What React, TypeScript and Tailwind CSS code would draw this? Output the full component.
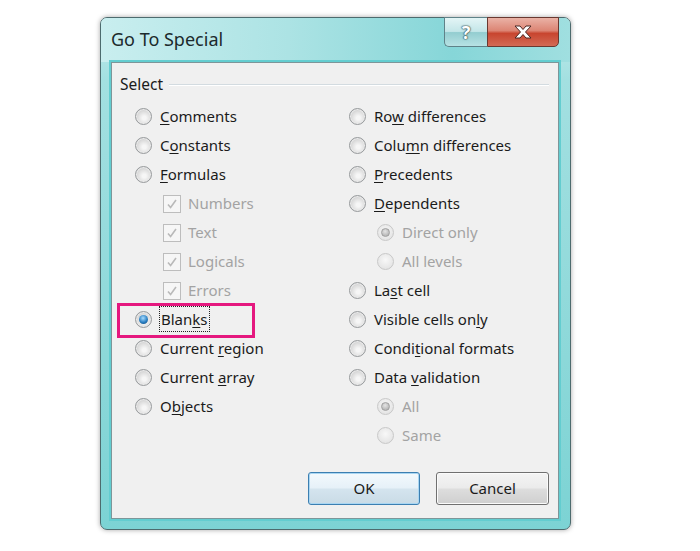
import React from "react"

type Item = {
  label: string
  key?: number
  kind?: "radio" | "check"
  indent?: boolean
  disabled?: boolean
  checked?: boolean
  focus?: boolean
}

const leftItems: Item[] = [
  { label: "Comments", key: 0 },
  { label: "Constants", key: 1 },
  { label: "Formulas", key: 0 },
  { label: "Numbers", kind: "check", indent: true, disabled: true, checked: true },
  { label: "Text", kind: "check", indent: true, disabled: true, checked: true },
  { label: "Logicals", kind: "check", indent: true, disabled: true, checked: true },
  { label: "Errors", kind: "check", indent: true, disabled: true, checked: true },
  { label: "Blanks", key: 4, checked: true, focus: true },
  { label: "Current region", key: 8 },
  { label: "Current array", key: 8 },
  { label: "Objects", key: 1 },
]

const rightItems: Item[] = [
  { label: "Row differences", key: 2 },
  { label: "Column differences", key: 4 },
  { label: "Precedents", key: 0 },
  { label: "Dependents", key: 0 },
  { label: "Direct only", indent: true, disabled: true, checked: true },
  { label: "All levels", indent: true, disabled: true },
  { label: "Last cell", key: 2 },
  { label: "Visible cells only", key: 16 },
  { label: "Conditional formats", key: 5 },
  { label: "Data validation", key: 5 },
  { label: "All", indent: true, disabled: true, checked: true },
  { label: "Same", indent: true, disabled: true },
]

function Label({ text, k }: { text: string; k?: number }) {
  if (k === undefined) return <>{text}</>
  return (
    <>
      {text.slice(0, k)}
      <span className="underline underline-offset-[2px]">{text[k]}</span>
      {text.slice(k + 1)}
    </>
  )
}

function Radio({ checked, disabled }: { checked?: boolean; disabled?: boolean }) {
  return (
    <div
      className={
        "w-[17px] h-[17px] rounded-full border flex items-center justify-center shrink-0 " +
        (disabled
          ? "border-[#c8c8c8] bg-[radial-gradient(circle_at_50%_40%,#f8f8f8,#dedede)]"
          : "border-[#979a9c] bg-[radial-gradient(circle_at_55%_60%,#f6f6f6_15%,#dcdcdc_55%,#bdbfc1_100%)] shadow-[inset_0_0_0_1px_#eaeaea]")
      }
    >
      {checked && (
        <div
          className={
            "w-[9px] h-[9px] rounded-full " +
            (disabled
              ? "bg-[radial-gradient(circle_at_45%_35%,#e4e4e4,#a6a6a6)] border border-[#a0a0a0]"
              : "bg-[radial-gradient(circle_at_45%_35%,#a8dcff,#2a7fc2_55%,#0f3f6e)]")
          }
        />
      )}
    </div>
  )
}

function Check() {
  return (
    <div className="w-[18px] h-[18px] border border-[#bdbdbd] bg-[#f6f6f6] flex items-center justify-center shrink-0">
      <svg width="12" height="12" viewBox="0 0 12 12">
        <path d="M2 6.5 L4.6 9.5 L10 2" fill="none" stroke="#b9b9b9" strokeWidth="1.6" />
      </svg>
    </div>
  )
}

function Row({ item }: { item: Item }) {
  const color = item.disabled ? "text-[#a3a3a3]" : "text-[#1b1b1b]"
  return (
    <div className={"h-[29px] flex items-center " + (item.indent ? "pl-[28px]" : "")}>
      {item.kind === "check" ? <Check /> : <Radio checked={item.checked} disabled={item.disabled} />}
      <span className={(item.kind === "check" ? "ml-[6px] " : "ml-[7px] ") + color + " leading-none"}>
        {item.focus ? (
          <span className="border border-dotted border-[#222] px-[1px] py-[2px]">
            <Label text={item.label} k={item.key} />
          </span>
        ) : (
          <span className="px-[1px]">
            <Label text={item.label} k={item.key} />
          </span>
        )}
      </span>
    </div>
  )
}

export default function App() {
  return (
    <div
      className="w-[700px] h-[551px] bg-white pt-[17px] pl-[100px] text-[15px]"
      style={{ fontFamily: '"Noto Sans", "Open Sans", sans-serif' }}
    >
      <div className="w-[471px] h-[513px] rounded-[7px] border border-[#4d6b6e] bg-[linear-gradient(180deg,#c4ecec_0%,#a3e0e1_12%,#8fd9da_60%,#7cd3d4_100%)] shadow-[0_0_5px_rgba(0,0,0,0.35)] flex flex-col">
        {/* title bar */}
        <div className="h-[44px] flex items-start bg-[linear-gradient(90deg,#c9eeef_0%,#ace3e4_40%,#86d6d8_75%,#a0dfe0_100%)] rounded-t-[6px]">
          <div className="pl-[10px] pt-[12px] text-[18px] text-[#1c2a2c] leading-none">Go To Special</div>
          <div className="ml-auto mr-[11px] flex -mt-[1px]">
            <div className="w-[43px] h-[30px] rounded-bl-[5px] border border-[#5f8288] border-r-0 bg-[linear-gradient(180deg,#e4f5f6_0%,#c3e6e8_48%,#93cdd0_52%,#b7e2e4_100%)] flex items-center justify-center">
              <span className="text-white font-bold text-[18px] leading-none [text-shadow:0_0_1px_#2e4a4e,0_0_1px_#2e4a4e,0_0_2px_#2e4a4e]">?</span>
            </div>
            <div className="w-[72px] h-[30px] rounded-br-[5px] border border-[#6a3830] bg-[linear-gradient(180deg,#eab2a6_0%,#dc8574_45%,#c8452f_55%,#d36a55_100%)] flex items-center justify-center">
              <svg width="22" height="16" viewBox="0 0 22 16">
                <path
                  d="M3 2 H8 L11 5.5 L14 2 H19 L13.5 8 L19 14 H14 L11 10.5 L8 14 H3 L8.5 8 Z"
                  fill="#ffffff"
                  stroke="#4a2622"
                  strokeWidth="1"
                  strokeLinejoin="round"
                />
              </svg>
            </div>
          </div>
        </div>

        {/* client area */}
        <div className="ml-[10px] mr-[11px] mb-[10px] flex-1 bg-[#f0f0f0] border border-[#7d9699] shadow-[0_0_0_2px_#63cdd0] relative flex flex-col">
          <div className="flex items-center pl-[8px] pr-[9px] mt-[13px] h-[18px]">
            <span className="text-[#1b1b1b] leading-none pr-[6px] text-[15.5px]">Select</span>
            <div className="flex-1 h-[2px] border-t border-[#d3dbe0] border-b border-b-white" />
          </div>

          <div className="flex mt-[8px]">
            <div className="w-[237px] pl-[23px]">
              {leftItems.map((it) => (
                <Row key={it.label} item={it} />
              ))}
            </div>
            <div className="flex-1">
              {rightItems.map((it) => (
                <Row key={it.label + "r"} item={it} />
              ))}
            </div>
          </div>

          <div className="flex justify-end gap-[16px] pr-[9px] mt-[22px]">
            <button className="w-[112px] h-[33px] rounded-[3px] border border-[#3c7fb1] bg-[linear-gradient(180deg,#f3f9fd_0%,#e6f1f8_48%,#d4e4ee_52%,#c9dbe6_100%)] shadow-[inset_0_0_0_1px_#a9d6f2] text-[#1b1b1b]">
              OK
            </button>
            <button className="w-[113px] h-[33px] rounded-[3px] border border-[#707070] bg-[linear-gradient(180deg,#f4f4f4_0%,#ebebeb_48%,#dddddd_52%,#cfcfcf_100%)] shadow-[inset_0_0_0_1px_#fbfbfb] text-[#1b1b1b]">
              Cancel
            </button>
          </div>

          {/* highlight annotation */}
          <div className="absolute left-[5px] top-[240px] w-[138px] h-[35px] border-[3px] border-[#e5187f] pointer-events-none" />
        </div>
      </div>
    </div>
  )
}
